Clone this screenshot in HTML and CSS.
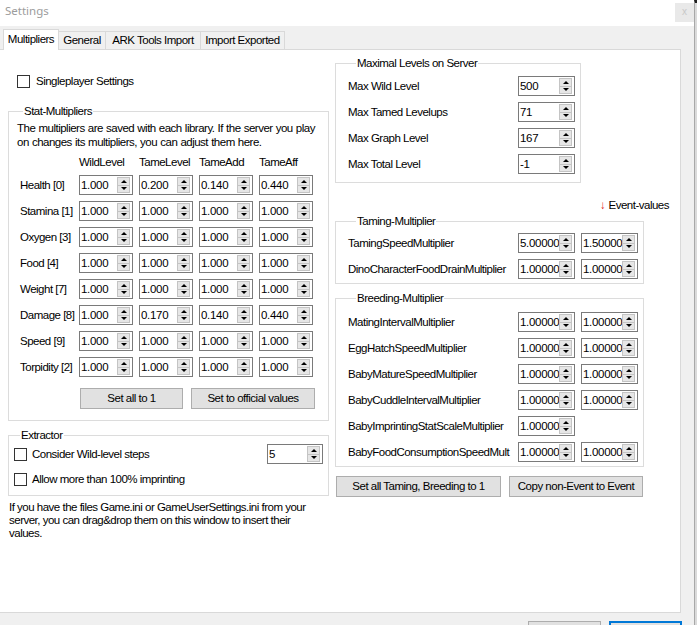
FILE: index.html
```html
<!DOCTYPE html>
<html>
<head>
<meta charset="utf-8">
<title>Settings</title>
<link rel="stylesheet" href="styles.css">
</head>
<body>
<div class="window">
  <div class="titlebar">
    <div class="title">Settings</div>
    <div class="close">x</div>
  </div>
  <div class="tabs">
    <div class="tab active t1">Multipliers</div>
    <div class="tab t2">General</div>
    <div class="tab t3">ARK Tools Import</div>
    <div class="tab t4">Import Exported</div>
  </div>
  <div class="panel">
    <div class="left">
      <div class="check single"><span class="box"></span><span>Singleplayer Settings</span></div>

      <div class="group stat">
        <div class="legend">Stat-Multipliers</div>
        <div class="desc">The multipliers are saved with each library. If the server you play<br>on changes its multipliers, you can adjust them here.</div>
        <div class="statgrid">
          <div></div><div class="hdr">WildLevel</div><div class="hdr">TameLevel</div><div class="hdr">TameAdd</div><div class="hdr">TameAff</div>

          <div class="lbl">Health [0]</div>
          <div class="num"><span class="val">1.000</span><span class="spin"><i class="up"></i><i class="dn"></i></span></div>
          <div class="num"><span class="val">0.200</span><span class="spin"><i class="up"></i><i class="dn"></i></span></div>
          <div class="num"><span class="val">0.140</span><span class="spin"><i class="up"></i><i class="dn"></i></span></div>
          <div class="num"><span class="val">0.440</span><span class="spin"><i class="up"></i><i class="dn"></i></span></div>

          <div class="lbl">Stamina [1]</div>
          <div class="num"><span class="val">1.000</span><span class="spin"><i class="up"></i><i class="dn"></i></span></div>
          <div class="num"><span class="val">1.000</span><span class="spin"><i class="up"></i><i class="dn"></i></span></div>
          <div class="num"><span class="val">1.000</span><span class="spin"><i class="up"></i><i class="dn"></i></span></div>
          <div class="num"><span class="val">1.000</span><span class="spin"><i class="up"></i><i class="dn"></i></span></div>

          <div class="lbl">Oxygen [3]</div>
          <div class="num"><span class="val">1.000</span><span class="spin"><i class="up"></i><i class="dn"></i></span></div>
          <div class="num"><span class="val">1.000</span><span class="spin"><i class="up"></i><i class="dn"></i></span></div>
          <div class="num"><span class="val">1.000</span><span class="spin"><i class="up"></i><i class="dn"></i></span></div>
          <div class="num"><span class="val">1.000</span><span class="spin"><i class="up"></i><i class="dn"></i></span></div>

          <div class="lbl">Food [4]</div>
          <div class="num"><span class="val">1.000</span><span class="spin"><i class="up"></i><i class="dn"></i></span></div>
          <div class="num"><span class="val">1.000</span><span class="spin"><i class="up"></i><i class="dn"></i></span></div>
          <div class="num"><span class="val">1.000</span><span class="spin"><i class="up"></i><i class="dn"></i></span></div>
          <div class="num"><span class="val">1.000</span><span class="spin"><i class="up"></i><i class="dn"></i></span></div>

          <div class="lbl">Weight [7]</div>
          <div class="num"><span class="val">1.000</span><span class="spin"><i class="up"></i><i class="dn"></i></span></div>
          <div class="num"><span class="val">1.000</span><span class="spin"><i class="up"></i><i class="dn"></i></span></div>
          <div class="num"><span class="val">1.000</span><span class="spin"><i class="up"></i><i class="dn"></i></span></div>
          <div class="num"><span class="val">1.000</span><span class="spin"><i class="up"></i><i class="dn"></i></span></div>

          <div class="lbl">Damage [8]</div>
          <div class="num"><span class="val">1.000</span><span class="spin"><i class="up"></i><i class="dn"></i></span></div>
          <div class="num"><span class="val">0.170</span><span class="spin"><i class="up"></i><i class="dn"></i></span></div>
          <div class="num"><span class="val">0.140</span><span class="spin"><i class="up"></i><i class="dn"></i></span></div>
          <div class="num"><span class="val">0.440</span><span class="spin"><i class="up"></i><i class="dn"></i></span></div>

          <div class="lbl">Speed [9]</div>
          <div class="num"><span class="val">1.000</span><span class="spin"><i class="up"></i><i class="dn"></i></span></div>
          <div class="num"><span class="val">1.000</span><span class="spin"><i class="up"></i><i class="dn"></i></span></div>
          <div class="num"><span class="val">1.000</span><span class="spin"><i class="up"></i><i class="dn"></i></span></div>
          <div class="num"><span class="val">1.000</span><span class="spin"><i class="up"></i><i class="dn"></i></span></div>

          <div class="lbl">Torpidity [2]</div>
          <div class="num"><span class="val">1.000</span><span class="spin"><i class="up"></i><i class="dn"></i></span></div>
          <div class="num"><span class="val">1.000</span><span class="spin"><i class="up"></i><i class="dn"></i></span></div>
          <div class="num"><span class="val">1.000</span><span class="spin"><i class="up"></i><i class="dn"></i></span></div>
          <div class="num"><span class="val">1.000</span><span class="spin"><i class="up"></i><i class="dn"></i></span></div>
        </div>
        <div class="btnrow statbtns">
          <div class="btn b1">Set all to 1</div>
          <div class="btn b2">Set to official values</div>
        </div>
      </div>

      <div class="group extractor">
        <div class="legend">Extractor</div>
        <div class="exrow">
          <div class="check"><span class="box"></span><span>Consider Wild-level steps</span></div>
          <div class="num w56"><span class="val">5</span><span class="spin"><i class="up"></i><i class="dn"></i></span></div>
        </div>
        <div class="check exrow2"><span class="box"></span><span>Allow more than 100% imprinting</span></div>
      </div>

      <div class="note">If you have the files Game.ini or GameUserSettings.ini from your<br>server, you can drag&amp;drop them on this window to insert their<br>values.</div>
    </div>

    <div class="right">
      <div class="group maxlv">
        <div class="legend">Maximal Levels on Server</div>
        <div class="rgrid one">
          <div class="lbl">Max Wild Level</div>
          <div class="num w57"><span class="val">500</span><span class="spin"><i class="up"></i><i class="dn"></i></span></div>
          <div class="lbl">Max Tamed Levelups</div>
          <div class="num w57"><span class="val">71</span><span class="spin"><i class="up"></i><i class="dn"></i></span></div>
          <div class="lbl">Max Graph Level</div>
          <div class="num w57"><span class="val">167</span><span class="spin"><i class="up"></i><i class="dn"></i></span></div>
          <div class="lbl">Max Total Level</div>
          <div class="num w57"><span class="val">-1</span><span class="spin"><i class="up"></i><i class="dn"></i></span></div>
        </div>
      </div>

      <div class="event"><span class="arrow">↓</span> Event-values</div>

      <div class="group taming">
        <div class="legend">Taming-Multiplier</div>
        <div class="rgrid two">
          <div class="lbl">TamingSpeedMultiplier</div>
          <div class="num w57"><span class="val">5.00000</span><span class="spin"><i class="up"></i><i class="dn"></i></span></div>
          <div class="num w57"><span class="val">1.50000</span><span class="spin"><i class="up"></i><i class="dn"></i></span></div>
          <div class="lbl">DinoCharacterFoodDrainMultiplier</div>
          <div class="num w57"><span class="val">1.00000</span><span class="spin"><i class="up"></i><i class="dn"></i></span></div>
          <div class="num w57"><span class="val">1.00000</span><span class="spin"><i class="up"></i><i class="dn"></i></span></div>
        </div>
      </div>

      <div class="group breeding">
        <div class="legend">Breeding-Multiplier</div>
        <div class="rgrid two">
          <div class="lbl">MatingIntervalMultiplier</div>
          <div class="num w57"><span class="val">1.00000</span><span class="spin"><i class="up"></i><i class="dn"></i></span></div>
          <div class="num w57"><span class="val">1.00000</span><span class="spin"><i class="up"></i><i class="dn"></i></span></div>
          <div class="lbl">EggHatchSpeedMultiplier</div>
          <div class="num w57"><span class="val">1.00000</span><span class="spin"><i class="up"></i><i class="dn"></i></span></div>
          <div class="num w57"><span class="val">1.00000</span><span class="spin"><i class="up"></i><i class="dn"></i></span></div>
          <div class="lbl">BabyMatureSpeedMultiplier</div>
          <div class="num w57"><span class="val">1.00000</span><span class="spin"><i class="up"></i><i class="dn"></i></span></div>
          <div class="num w57"><span class="val">1.00000</span><span class="spin"><i class="up"></i><i class="dn"></i></span></div>
          <div class="lbl">BabyCuddleIntervalMultiplier</div>
          <div class="num w57"><span class="val">1.00000</span><span class="spin"><i class="up"></i><i class="dn"></i></span></div>
          <div class="num w57"><span class="val">1.00000</span><span class="spin"><i class="up"></i><i class="dn"></i></span></div>
          <div class="lbl">BabyImprintingStatScaleMultiplier</div>
          <div class="num w57"><span class="val">1.00000</span><span class="spin"><i class="up"></i><i class="dn"></i></span></div>
          <div></div>
          <div class="lbl">BabyFoodConsumptionSpeedMult</div>
          <div class="num w57"><span class="val">1.00000</span><span class="spin"><i class="up"></i><i class="dn"></i></span></div>
          <div class="num w57"><span class="val">1.00000</span><span class="spin"><i class="up"></i><i class="dn"></i></span></div>
        </div>
      </div>

      <div class="btnrow rbtns">
        <div class="btn b3">Set all Taming, Breeding to 1</div>
        <div class="btn b4">Copy non-Event to Event</div>
      </div>
    </div>
  </div>
  <div class="footer">
    <div class="fbtn"></div>
    <div class="fbtn ok"></div>
  </div>
</div>
<div class="edge"></div>
</body>
</html>
```

FILE: styles.css
```css
* { box-sizing: border-box; }
html, body { margin: 0; padding: 0; }
body {
  width: 697px;
  height: 625px;
  overflow: hidden;
  display: flex;
  background: #f0f0f0;
  font-family: "Liberation Sans", Arial, sans-serif;
  font-size: 11.5px;
  letter-spacing: -0.5px;
  color: #000;
}
.window {
  width: 694px;
  height: 625px;
  display: flex;
  flex-direction: column;
  background: #f0f0f0;
}
.edge {
  width: 3px;
  height: 625px;
  background: #dadada;
  border-left: 1px solid #a8a8a8;
  border-top: 3px solid #202020;
}
.titlebar {
  height: 26px;
  flex: none;
  background: #fff;
  display: flex;
  justify-content: space-between;
  align-items: flex-start;
}
.title {
  font-family: "Noto Sans", "Open Sans", sans-serif;
  font-size: 11.5px;
  letter-spacing: 0;
  color: #9c9c9c;
  line-height: 22px;
  padding-left: 5px;
}
.close {
  width: 19px;
  height: 19px;
  margin-top: 3px;
  background: #e9e9e9;
  color: #c8c8c8;
  font-size: 10px;
  letter-spacing: 0;
  line-height: 18px;
  text-align: center;
}

/* tabs */
.tabs {
  flex: none;
  height: 20px;
  margin-top: 3px;
  padding-left: 3px;
  display: flex;
  align-items: flex-end;
}
.tab {
  height: 18px;
  line-height: 17px;
  text-align: center;
  background: #f0f0f0;
  border-top: 1px solid #d9d9d9;
  border-right: 1px solid #d9d9d9;
}
.tab.active {
  position: relative;
  z-index: 1;
  height: 21px;
  margin-bottom: -1px;
  line-height: 19px;
  background: #fff;
  border-left: 1px solid #d9d9d9;
}
.t1 { width: 56px; }
.t2 { width: 47px; }
.t3 { width: 95px; }
.t4 { width: 84px; }

/* panel */
.panel {
  flex: none;
  width: 681px;
  height: 564px;
  background: #fff;
  border-top: 1px solid #d9d9d9;
  border-right: 1px solid #d9d9d9;
  border-bottom: 1px solid #d9d9d9;
  display: flex;
  padding-left: 8px;
  gap: 6px;
}
.left {
  width: 321px;
  display: flex;
  flex-direction: column;
}
.right {
  flex: 1;
  display: flex;
  flex-direction: column;
  align-items: flex-start;
  padding-right: 11px;
}

/* generic */
.check {
  display: flex;
  align-items: center;
  gap: 5px;
  line-height: 13px;
  white-space: nowrap;
}
.box {
  width: 13px;
  height: 13px;
  flex: none;
  background: #fff;
  border: 1px solid #333;
}
.single {
  margin-top: 25px;
  height: 13px;
  padding-left: 9px;
  gap: 6px;
}
.group {
  border: 1px solid #dcdcdc;
}
.legend {
  width: fit-content;
  margin: -8px 0 0 6px;
  padding: 0 1px;
  background: #fff;
  line-height: 14px;
  white-space: nowrap;
}
.right .legend { margin-left: 8px; }

.num {
  width: 54px;
  height: 20px;
  display: flex;
  background: #fff;
  border: 1px solid #7a7a7a;
}
.num.w56 { width: 56px; }
.num.w57 { width: 57px; }
.val {
  flex: 1;
  min-width: 0;
  overflow: hidden;
  white-space: nowrap;
  line-height: 18px;
  padding-left: 1px;
  letter-spacing: -0.3px;
}
.spin {
  width: 13px;
  flex: none;
  margin: 1px 2px 1px 0;
  display: flex;
  flex-direction: column;
}
.spin i {
  flex: 1;
  display: flex;
  align-items: center;
  justify-content: center;
  background: #e6e6e6;
  border: 1px solid #c4c4c4;
}
.spin i.dn { border-top: none; }
.spin i.up::after {
  content: "";
  border-left: 3px solid transparent;
  border-right: 3px solid transparent;
  border-bottom: 3px solid #000;
}
.spin i.dn::after {
  content: "";
  border-left: 3px solid transparent;
  border-right: 3px solid transparent;
  border-top: 3px solid #000;
}
.btnrow {
  display: flex;
  gap: 8px;
}
.btn {
  height: 21px;
  line-height: 19px;
  text-align: center;
  background: #e1e1e1;
  border: 1px solid #adadad;
  white-space: nowrap;
}
.lbl {
  line-height: 20px;
  white-space: nowrap;
}

/* stat group */
.stat {
  margin-top: 23px;
  padding: 0 0 11px 8px;
}
.desc {
  margin-top: 3px;
  line-height: 14px;
  white-space: nowrap;
  word-spacing: 0.4px;
}
.statgrid {
  margin-top: 6px;
  margin-left: 3px;
  display: grid;
  grid-template-columns: 53px repeat(4, 54px);
  grid-auto-rows: 20px;
  grid-template-rows: 14px;
  column-gap: 6px;
  row-gap: 6px;
}
.hdr {
  line-height: 14px;
  white-space: nowrap;
}
.statbtns {
  margin-top: 11px;
  margin-left: 63px;
}
.b1 { width: 103px; }
.b2 { width: 124px; }

/* extractor */
.extractor {
  margin-top: 14px;
  padding: 0 5px 9px 5px;
}
.exrow {
  margin-top: 2px;
  height: 20px;
  display: flex;
  justify-content: space-between;
  align-items: center;
}
.exrow2 {
  margin-top: 9px;
  height: 13px;
}
.note {
  margin-top: 5px;
  padding-left: 1px;
  line-height: 13px;
  white-space: nowrap;
}

/* right groups */
.maxlv {
  width: 246px;
  margin-top: 13px;
  padding: 0 5px 8px 12px;
}
.rgrid {
  display: grid;
  grid-auto-rows: 20px;
  column-gap: 6px;
  row-gap: 6px;
}
.rgrid.one { grid-template-columns: 1fr 57px; margin-top: 6px; }
.rgrid.two { grid-template-columns: 1fr 57px 57px; }
.event {
  align-self: stretch;
  text-align: right;
  margin-top: 15px;
  line-height: 14px;
}
.arrow { color: #e01010; letter-spacing: 0; }
.taming {
  width: 309px;
  margin-top: 9px;
  padding: 0 5px 4px 12px;
}
.taming .rgrid { margin-top: 5px; }
.breeding {
  width: 309px;
  margin-top: 14px;
  padding: 0 5px 4px 12px;
}
.breeding .rgrid { margin-top: 7px; }
.rbtns {
  margin-top: 9px;
  margin-left: 1px;
}
.b3 { width: 165px; }
.b4 { width: 134px; }

/* footer */
.footer {
  flex: 1;
  display: flex;
  justify-content: flex-end;
  gap: 8px;
  padding: 8px 12px 0 0;
}
.fbtn {
  width: 73px;
  height: 23px;
  background: #e1e1e1;
  border: 1px solid #adadad;
}
.fbtn.ok {
  border: 2px solid #0078d7;
}
```
